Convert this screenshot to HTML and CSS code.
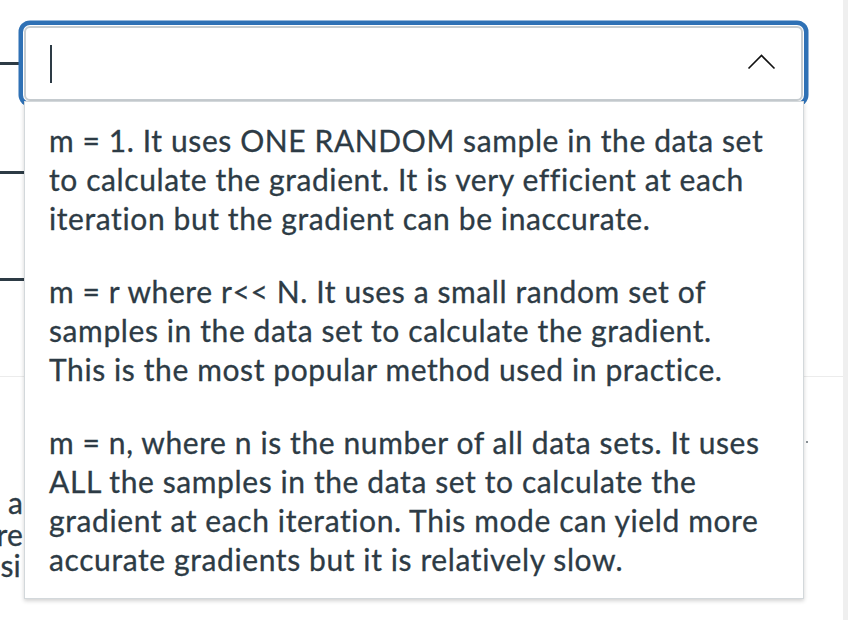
FILE: index.html
```html
<!DOCTYPE html>
<html lang="en">
<head>
<meta charset="utf-8">
<title>Select</title>
<link rel="stylesheet" href="styles.css">
</head>
<body>
<div class="page">
  <div class="main">
    <div class="field-row">
      <div class="stub stub-short"></div>
      <div class="combo">
        <div class="input">
          <span class="caret"></span>
          <svg class="chevron" width="30" height="16" viewBox="0 0 30 16" aria-hidden="true">
            <polyline points="1.5,14.5 14.5,1.5 27.5,14.5" fill="none" stroke="#111" stroke-width="1.6"/>
          </svg>
        </div>
        <ul class="listbox" role="listbox">
          <li class="option">m = 1. It uses ONE RANDOM sample in the data set<br>to calculate the gradient. It is very efficient at each<br>iteration but the gradient can be inaccurate.</li>
          <li class="option">m = r where r&lt;&lt; N. It uses a small random set of<br>samples in the data set to calculate the gradient.<br>This is the most popular method used in practice.</li>
          <li class="option">m = n, where n is the number of all data sets. It uses<br>ALL the samples in the data set to calculate the<br>gradient at each iteration. This mode can yield more<br>accurate gradients but it is relatively slow.</li>
        </ul>
      </div>
    </div>
    <div class="stub stub-long stub-2"></div>
    <div class="stub stub-long stub-3"></div>
    <div class="divider"></div>
    <div class="bg-text">
      <div class="bg-line"><span>in a</span></div>
      <div class="bg-line"><span>are</span></div>
      <div class="bg-line bg-line-short"><span>si</span></div>
    </div>
    <span class="dot"></span>
  </div>
  <div class="rail"></div>
</div>
</body>
</html>
```
FILE: styles.css
```css
html, body {
  margin: 0;
  padding: 0;
  background: #ffffff;
}
body {
  font-family: Lato, "Noto Sans", sans-serif;
  color: #2d3b45;
  overflow: hidden;
}
.page {
  display: flex;
  height: 620px;
}
.main {
  flex: 1;
  position: relative;
}
.rail {
  width: 5px;
  background: #efefef;
}
.field-row {
  display: flex;
  align-items: flex-start;
  padding-top: 26px;
}
.stub {
  height: 3px;
  background: #2d3b45;
}
.stub-short {
  width: 24px;
  margin-top: 36px;
  flex: none;
}
.stub-long {
  width: 40px;
}
.stub-2 {
  margin-top: 70px;
}
.stub-3 {
  margin-top: 104px;
}
.divider {
  margin-top: 95px;
  height: 1px;
  background: #ececec;
}
.bg-text {
  margin-top: 110px;
  font-size: 30px;
  line-height: 31.5px;
  letter-spacing: 0.2px;
  -webkit-text-stroke: 0.3px #2d3b45;
}
.bg-line {
  width: 23px;
  display: flex;
  justify-content: flex-end;
  white-space: nowrap;
}
.bg-line-short {
  width: 21px;
}
.combo {
  position: relative;
  width: 779px;
  flex: none;
}
.input {
  height: 71px;
  border: 2px solid #c7cdd1;
  border-radius: 6px;
  background: #fff;
  box-shadow: 0 0 0 1px #fff, 0 0 0 5.5px #2f71b5;
  display: flex;
  align-items: center;
  justify-content: space-between;
  padding: 0 24px 0 24px;
}
.caret {
  width: 2px;
  height: 38px;
  background: #2d3b45;
}
.chevron {
  display: block;
  margin-bottom: 4px;
}
.listbox {
  position: absolute;
  top: 100%;
  left: 0;
  width: 778px;
  margin: 0;
  padding: 2px 0;
  list-style: none;
  background: #fff;
  border: 1px solid #d3d8db;
  box-shadow: 0 2px 4px rgba(0, 0, 0, 0.18);
  z-index: 2;
}
.option {
  padding: 17px 10px 17px 24px;
  font-size: 30px;
  line-height: 39px;
  letter-spacing: 0.6px;
  white-space: nowrap;
  -webkit-text-stroke: 0.3px #2d3b45;
  color: #2d3b45;
}
.dot {
  position: absolute;
  left: 806px;
  top: 441px;
  width: 2px;
  height: 2px;
  background: #8a9196;
}
```
